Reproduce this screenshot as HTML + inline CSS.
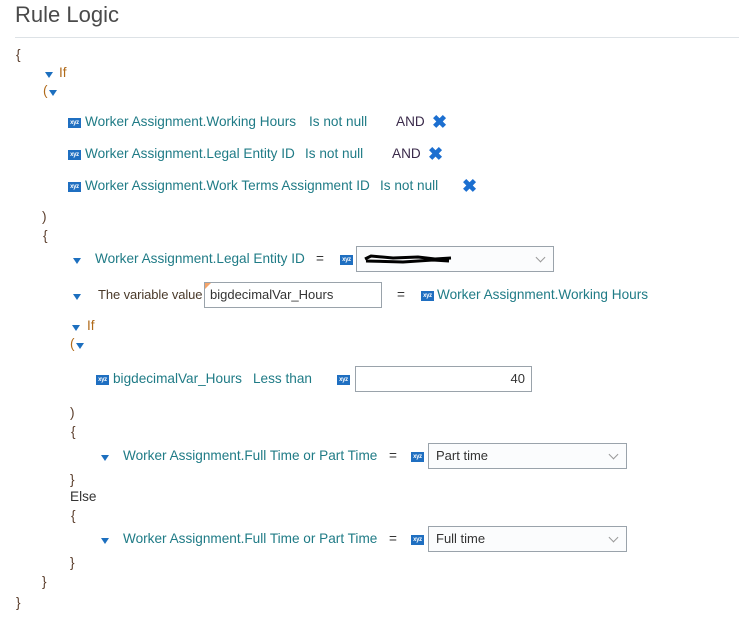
<!DOCTYPE html>
<html><head><meta charset="utf-8">
<style>
html,body{margin:0;padding:0;background:#fff;width:739px;height:624px;overflow:hidden;position:relative;font-family:"Liberation Sans",sans-serif;font-size:13.6px}
.t{position:absolute;line-height:16px;white-space:nowrap}
.teal{color:#1f7b86}
.dk{color:#333}
.br{color:#5a3d2b}
.or{color:#b06a1a}
.tri{position:absolute;width:0;height:0;border-left:4px solid transparent;border-right:4px solid transparent;border-top:6px solid #1c6fbf}
.ic{position:absolute;width:13px;height:10px;background:#1f6fc1;color:#fff;font-size:6px;line-height:10px;text-align:center;font-weight:bold;letter-spacing:-0.3px}
.box{position:absolute;border:1px solid #9aa3ab;background:#fbfcfd;box-sizing:border-box}
.box .t{font-size:13px}
.chev{position:absolute;right:9px;top:7px;width:6px;height:6px;border-right:1px solid #999;border-bottom:1px solid #999;transform:rotate(45deg)}
.x{position:absolute;color:#1c6fd0;font-weight:bold;font-size:18px;line-height:16px}
</style></head><body>
<div class="t" style="left:15px;top:1px;font-size:22px;line-height:28px;color:#4a4a4a">Rule Logic</div>
<div style="position:absolute;left:15px;top:37px;width:724px;height:1px;background:#dde2e6"></div>

<div class="t br" style="left:16px;top:47px">{</div>
<div class="tri" style="left:45px;top:72px"></div><div class="t or" style="left:59px;top:65px">If</div>
<div class="t or" style="left:43px;top:83px">(</div><div class="tri" style="left:49px;top:90px"></div>

<div class="ic" style="left:68px;top:118px">xyz</div><div class="t teal" style="left:85px;top:114px">Worker Assignment.Working Hours</div><div class="t teal" style="left:309px;top:114px">Is not null</div><div class="t" style="left:396px;top:114px;color:#3a2a4a">AND</div><div class="x" style="left:432px;top:114px">✖</div>
<div class="ic" style="left:68px;top:150px">xyz</div><div class="t teal" style="left:85px;top:146px">Worker Assignment.Legal Entity ID</div><div class="t teal" style="left:305px;top:146px">Is not null</div><div class="t" style="left:392px;top:146px;color:#3a2a4a">AND</div><div class="x" style="left:428px;top:146px">✖</div>
<div class="ic" style="left:68px;top:182px">xyz</div><div class="t teal" style="left:85px;top:178px">Worker Assignment.Work Terms Assignment ID</div><div class="t teal" style="left:380px;top:178px">Is not null</div><div class="x" style="left:462px;top:178px">✖</div>

<div class="t br" style="left:42px;top:209px">)</div>
<div class="t br" style="left:43px;top:228px">{</div>

<div class="tri" style="left:73px;top:258px"></div><div class="t teal" style="left:95px;top:251px">Worker Assignment.Legal Entity ID</div><div class="t dk" style="left:316px;top:251px">=</div><div class="ic" style="left:340px;top:255px">xyz</div>
<div class="box" style="left:356px;top:246px;width:198px;height:26px"><svg style="position:absolute;left:6px;top:6px" width="90" height="12"><path d="M2 6 L8 3 L30 5 L55 4 L72 6 L88 5 M3 8 L40 9 L70 7 L86 8" stroke="#000" stroke-width="3" fill="none"/></svg><div class="chev"></div></div>

<div class="tri" style="left:73px;top:294px"></div><div class="t" style="left:98px;top:287px;color:#4a3a2a;font-size:13px;letter-spacing:-0.1px">The variable value</div>
<div class="box" style="left:204px;top:282px;width:178px;height:26px;background:#fff"><div style="position:absolute;left:0;top:0;width:0;height:0;border-top:6px solid #f4a46a;border-right:6px solid transparent"></div><div class="t" style="left:5px;top:4px;color:#333">bigdecimalVar_Hours</div></div>
<div class="t dk" style="left:397px;top:287px">=</div><div class="ic" style="left:421px;top:291px">xyz</div><div class="t teal" style="left:437px;top:287px">Worker Assignment.Working Hours</div>

<div class="tri" style="left:72px;top:325px"></div><div class="t or" style="left:87px;top:318px">If</div>
<div class="t or" style="left:70px;top:336px">(</div><div class="tri" style="left:76px;top:343px"></div>

<div class="ic" style="left:96px;top:375px">xyz</div><div class="t teal" style="left:113px;top:371px">bigdecimalVar_Hours</div><div class="t teal" style="left:253px;top:371px">Less than</div><div class="ic" style="left:337px;top:375px">xyz</div>
<div class="box" style="left:355px;top:366px;width:177px;height:26px;background:#fff"><div class="t" style="right:6px;top:4px;color:#333">40</div></div>

<div class="t br" style="left:70px;top:405px">)</div>
<div class="t br" style="left:71px;top:424px">{</div>

<div class="tri" style="left:101px;top:455px"></div><div class="t teal" style="left:123px;top:448px">Worker Assignment.Full Time or Part Time</div><div class="t dk" style="left:389px;top:448px">=</div><div class="ic" style="left:411px;top:452px">xyz</div>
<div class="box" style="left:428px;top:443px;width:199px;height:26px"><div class="t" style="left:7px;top:4px;color:#333">Part time</div><div class="chev"></div></div>

<div class="t br" style="left:70px;top:472px">}</div>
<div class="t dk" style="left:70px;top:489px">Else</div>
<div class="t br" style="left:71px;top:508px">{</div>

<div class="tri" style="left:101px;top:538px"></div><div class="t teal" style="left:123px;top:531px">Worker Assignment.Full Time or Part Time</div><div class="t dk" style="left:389px;top:531px">=</div><div class="ic" style="left:411px;top:535px">xyz</div>
<div class="box" style="left:428px;top:526px;width:199px;height:26px"><div class="t" style="left:7px;top:4px;color:#333">Full time</div><div class="chev"></div></div>

<div class="t br" style="left:70px;top:555px">}</div>
<div class="t br" style="left:42px;top:574px">}</div>
<div class="t br" style="left:16px;top:595px">}</div>
</body></html>
